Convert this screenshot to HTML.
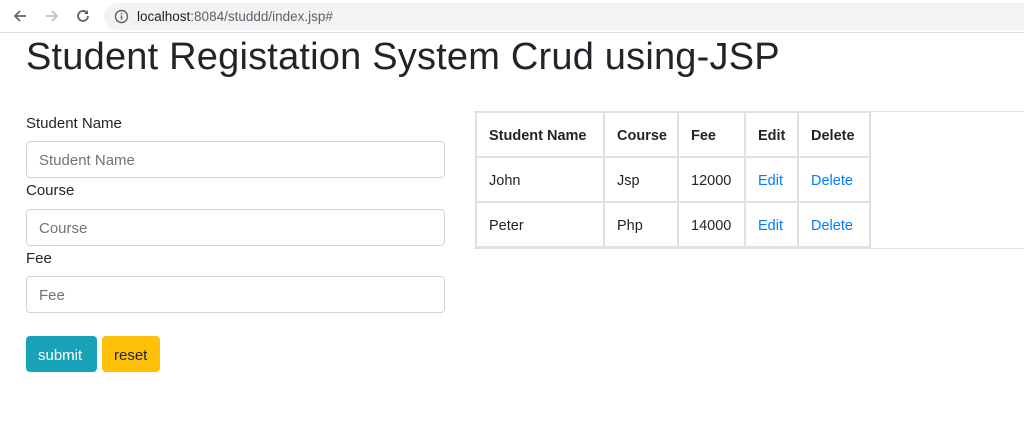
<!DOCTYPE html>
<html><head><meta charset="utf-8"><style>
*{box-sizing:border-box;margin:0;padding:0}
body{width:1024px;height:442px;background:#fff;font-family:"Liberation Sans",sans-serif;color:#212529;position:relative;overflow:hidden}
.bar{position:absolute;left:0;top:0;width:1024px;height:33px;background:#fff;border-bottom:1px solid #dadce0}
.url{position:absolute;left:104px;top:3px;width:930px;height:27px;background:#f1f3f4;border-radius:14px}
.url span{position:absolute;left:33px;top:6px;font-size:13.5px;color:#202124}
.url span i{font-style:normal;color:#5f6368}
.ab{position:absolute}
h1{position:absolute;left:26px;top:36px;font-size:38px;font-weight:normal;color:#212529;letter-spacing:0.2px}
.lbl{position:absolute;left:26px;font-size:15px}
.inp{position:absolute;left:26px;width:419px;height:37px;border:1px solid #ced4da;border-radius:4px;font-size:15px;color:#6c757d;padding:10px 12px 0}
.btn{position:absolute;top:336px;height:36px;border-radius:4px;font-size:15px;padding:11px 12px 0}
.wrap{position:absolute;left:474px;top:111px;width:560px;height:138px;border-top:1px solid #dee2e6;border-bottom:1px solid #dee2e6}
table{position:absolute;left:475px;top:111px;border-collapse:collapse;font-size:14.5px;table-layout:fixed;width:394px}
td,th{border:2px solid #dee2e6;padding:3px 0 0 12px;height:45px;text-align:left;white-space:nowrap;overflow:hidden}
th{font-weight:bold}
a{color:#007bff;text-decoration:none}
</style></head><body>
<div class="bar">
<svg class="ab" style="left:12px;top:8px" width="16" height="16" viewBox="0 0 16 16"><path d="M14 8H3M8 3L3 8l5 5" stroke="#5f6368" stroke-width="1.8" fill="none"/></svg>
<svg class="ab" style="left:44px;top:8px" width="16" height="16" viewBox="0 0 16 16"><path d="M2 8h11M8 3l5 5-5 5" stroke="#bdc1c6" stroke-width="1.8" fill="none"/></svg>
<svg class="ab" style="left:75px;top:8px" width="16" height="16" viewBox="0 0 16 16"><path d="M13 8a5 5 0 1 1-1.5-3.6" stroke="#5f6368" stroke-width="1.8" fill="none"/><path d="M13 2v4H9z" fill="#5f6368"/></svg>
<div class="url">
<svg class="ab" style="left:10px;top:6px" width="15" height="15" viewBox="0 0 15 15"><circle cx="7.5" cy="7.5" r="6" stroke="#5f6368" stroke-width="1.4" fill="none"/><path d="M7.5 6.5v4M7.5 4v1.3" stroke="#5f6368" stroke-width="1.5"/></svg>
<span>localhost<i>:8084/studdd/index.jsp#</i></span></div>
</div>
<h1>Student Registation System Crud using-JSP</h1>
<div class="lbl" style="top:115px">Student Name</div>
<div class="inp" style="top:141px">Student Name</div>
<div class="lbl" style="top:182px">Course</div>
<div class="inp" style="top:209px">Course</div>
<div class="lbl" style="top:250px">Fee</div>
<div class="inp" style="top:276px">Fee</div>
<div class="btn" style="left:26px;width:71px;background:#17a2b8;color:#fff">submit</div>
<div class="btn" style="left:102px;width:58px;background:#ffc107;color:#212529">reset</div>
<div class="wrap"></div>
<table>
<colgroup><col style="width:128px"><col style="width:74px"><col style="width:67px"><col style="width:53px"><col style="width:72px"></colgroup>
<tr><th>Student Name</th><th>Course</th><th>Fee</th><th>Edit</th><th>Delete</th></tr>
<tr><td>John</td><td>Jsp</td><td>12000</td><td><a>Edit</a></td><td><a>Delete</a></td></tr>
<tr><td>Peter</td><td>Php</td><td>14000</td><td><a>Edit</a></td><td><a>Delete</a></td></tr>
</table>
</body></html>
